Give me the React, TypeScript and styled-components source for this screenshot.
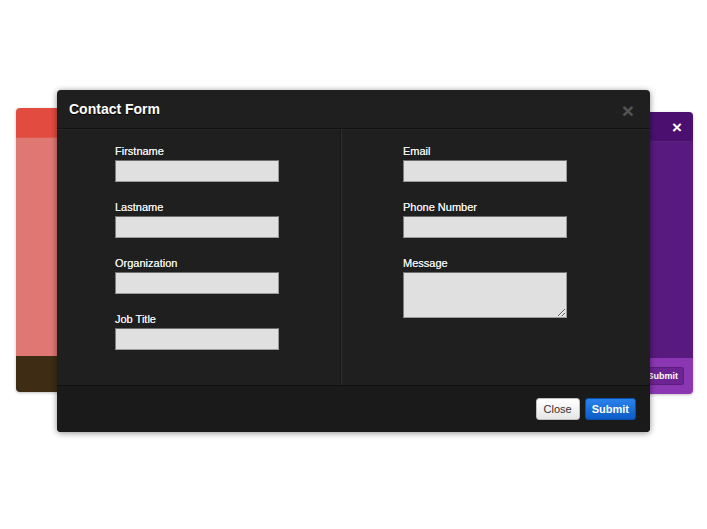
import type { FC } from 'react'
import styled, { createGlobalStyle } from 'styled-components'

const GlobalStyle = createGlobalStyle`
  html, body {
    margin: 0;
    padding: 0;
    background: #ffffff;
    font-family: "Liberation Sans", Arial, Helvetica, sans-serif;
  }
`

const leftFields = ['Firstname', 'Lastname', 'Organization', 'Job Title']
const rightFields = ['Email', 'Phone Number']

const App: FC = () => {
  return (
    <>
      <GlobalStyle />
      <Stage>
        {/* decks peeking out behind the active dialog */}
        <BackCard side="left">
          <BackHeader tone="#e24b40" />
          <BackBody tone="#df7873" />
          <BackFooter tone="#3e2c14" />
        </BackCard>
        <BackCard side="right">
          <BackHeader tone="#4b106f">
            <BackClose>×</BackClose>
          </BackHeader>
          <BackBody tone="#581a7e" />
          <BackFooter tone="#8b37b3">
            <BackSubmit>Submit</BackSubmit>
          </BackFooter>
        </BackCard>

        <Modal>
          <Header>
            <Title>Contact Form</Title>
            <CloseX>×</CloseX>
          </Header>
          <Body>
            <Column pad={58}>
              {leftFields.map((name) => (
                <Field key={name}>
                  <Label>{name}</Label>
                  <Input type="text" />
                </Field>
              ))}
            </Column>
            <Column pad={61} divided>
              {rightFields.map((name) => (
                <Field key={name}>
                  <Label>{name}</Label>
                  <Input type="text" />
                </Field>
              ))}
              <Field>
                <Label>Message</Label>
                <TextArea />
              </Field>
            </Column>
          </Body>
          <Footer>
            <Button>Close</Button>
            <Button primary>Submit</Button>
          </Footer>
        </Modal>
      </Stage>
    </>
  )
}

const Stage = styled.div`
  position: relative;
  width: 707px;
  height: 529px;
  padding: 90px 0 0 57px;
  box-sizing: border-box;
`

const BackCard = styled.div<{ side: 'left' | 'right' }>`
  position: absolute;
  top: ${(p) => (p.side === 'left' ? 108 : 112)}px;
  ${(p) => (p.side === 'left' ? 'left: 16px;' : 'right: 14px;')}
  width: 120px;
  height: ${(p) => (p.side === 'left' ? 284 : 282)}px;
  display: flex;
  flex-direction: column;
  border-radius: 4px;
  overflow: hidden;
  box-shadow: 0 1px 3px rgba(0, 0, 0, 0.25);
`

const BackHeader = styled.div<{ tone: string }>`
  height: 30px;
  flex: none;
  background: ${(p) => p.tone};
  display: flex;
  align-items: center;
  justify-content: flex-end;
  padding-right: 11px;
  box-shadow: inset 0 -1px 0 rgba(255, 255, 255, 0.08);
`

const BackBody = styled.div<{ tone: string }>`
  flex: 1;
  background: ${(p) => p.tone};
`

const BackFooter = styled.div<{ tone: string }>`
  height: 36px;
  flex: none;
  background: ${(p) => p.tone};
  display: flex;
  align-items: center;
  justify-content: flex-end;
  padding-right: 9px;
`

const BackClose = styled.span`
  color: #ffffff;
  font-size: 17px;
  font-weight: bold;
  line-height: 1;
`

const BackSubmit = styled.span`
  background: #6c2492;
  color: #ffffff;
  font-size: 9px;
  font-weight: bold;
  padding: 4px 6px;
  border-radius: 3px;
  box-shadow: inset 0 0 0 1px rgba(0, 0, 0, 0.15);
`

const Modal = styled.div`
  position: relative;
  width: 593px;
  height: 342px;
  display: flex;
  flex-direction: column;
  background: #1f1f1f;
  border-radius: 4px;
  overflow: hidden;
  box-shadow: 0 1px 6px rgba(0, 0, 0, 0.45);
`

const Header = styled.div`
  height: 38px;
  flex: none;
  display: flex;
  align-items: center;
  justify-content: space-between;
  padding: 0 16px 0 12px;
  border-bottom: 1px solid #131313;
  box-shadow: 0 1px 0 #262626;
`

const Title = styled.h3`
  margin: 0;
  color: #ffffff;
  font-size: 14px;
  font-weight: bold;
  text-shadow: 0 1px 0 #000;
`

const CloseX = styled.span`
  color: #555555;
  font-size: 21px;
  font-weight: bold;
  line-height: 1;
  margin-top: 2px;
`

const Body = styled.div`
  flex: 1;
  display: flex;
`

const Column = styled.div<{ pad: number; divided?: boolean }>`
  flex: ${(p) => (p.divided ? '1' : 'none')};
  width: ${(p) => (p.divided ? 'auto' : '284px')};
  display: flex;
  flex-direction: column;
  gap: 18px;
  padding: 15px 0 0 ${(p) => p.pad}px;
  box-sizing: border-box;
  ${(p) => (p.divided ? 'border-left: 1px solid #2f2f2f; box-shadow: -1px 0 0 #151515;' : '')}
`

const Field = styled.div`
  display: flex;
  flex-direction: column;
  gap: 2px;
`

const Label = styled.label`
  color: #eeeeee;
  font-size: 11px;
  line-height: 14px;
  text-shadow: 0 0 0.4px #eeeeee;
`

const Input = styled.input`
  width: 164px;
  height: 22px;
  box-sizing: border-box;
  margin: 0;
  background: #e0e0e0;
  border: 1px solid #8c8c8c;
  border-color: #6e6e6e #9a9a9a #9a9a9a #7e7e7e;
  outline: none;
`

const TextArea = styled.textarea`
  width: 164px;
  height: 46px;
  box-sizing: border-box;
  margin: 0;
  background: #e0e0e0;
  border: 1px solid #8c8c8c;
  border-color: #6e6e6e #9a9a9a #9a9a9a #7e7e7e;
  outline: none;
  resize: both;
`

const Footer = styled.div`
  height: 46px;
  flex: none;
  display: flex;
  align-items: center;
  justify-content: flex-end;
  gap: 5px;
  padding-right: 14px;
  background: #1a1a1a;
  border-top: 1px solid #111111;
`

const Button = styled.button<{ primary?: boolean }>`
  height: 22px;
  padding: 0 ${(p) => (p.primary ? 6 : 7)}px;
  box-sizing: border-box;
  font-family: "Liberation Sans", Arial, sans-serif;
  font-size: 11px;
  font-weight: ${(p) => (p.primary ? 'bold' : 'normal')};
  color: ${(p) => (p.primary ? '#ffffff' : '#333333')};
  background: ${(p) =>
    p.primary
      ? 'linear-gradient(#2a83ea, #0b5cc7)'
      : 'linear-gradient(#ffffff, #e6e6e6)'};
  border: 1px solid ${(p) => (p.primary ? '#0a4fae' : '#bdbdbd')};
  border-radius: 3px;
`

export default App
